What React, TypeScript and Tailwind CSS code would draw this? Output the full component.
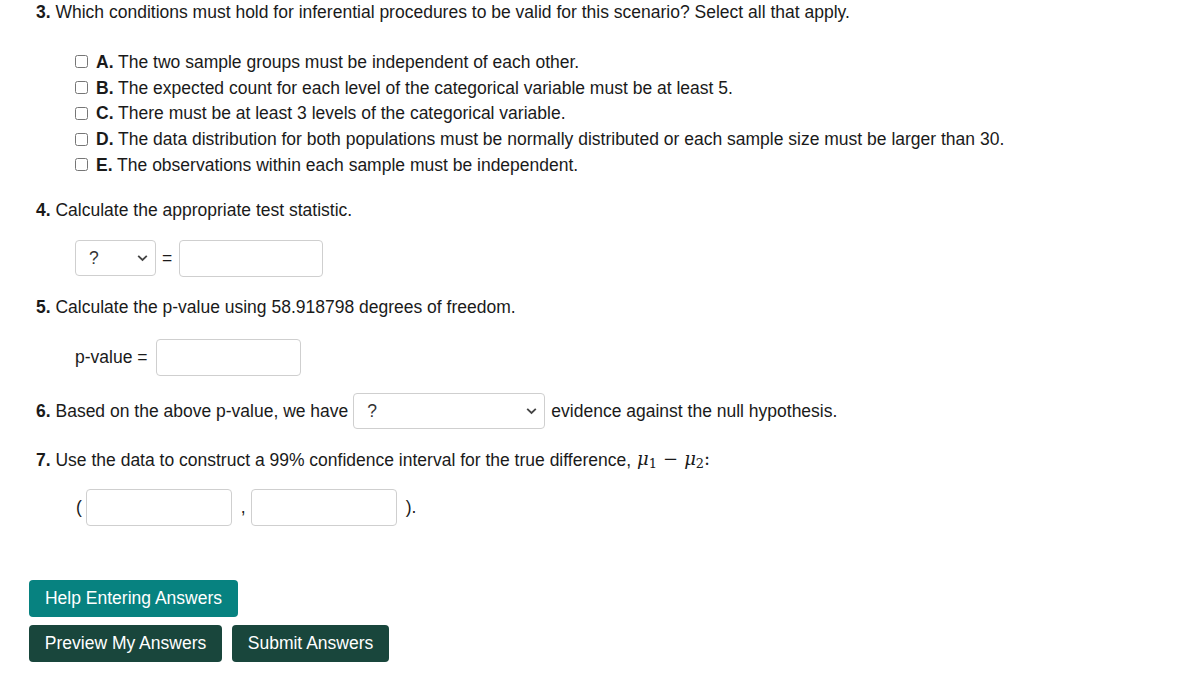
import React from 'react'

const options = [
  { key: 'A', text: 'The two sample groups must be independent of each other.' },
  { key: 'B', text: 'The expected count for each level of the categorical variable must be at least 5.' },
  { key: 'C', text: 'There must be at least 3 levels of the categorical variable.' },
  { key: 'D', text: 'The data distribution for both populations must be normally distributed or each sample size must be larger than 30.' },
  { key: 'E', text: 'The observations within each sample must be independent.' },
]

const Chevron = () => (
  <svg width="11" height="8" viewBox="0 0 11 8" className="pointer-events-none">
    <path d="M1.2 1.8 L5.5 6 L9.8 1.8" fill="none" stroke="#444" strokeWidth="1.8" />
  </svg>
)

const Select = ({ width }: { width: string }) => (
  <div className={`relative flex items-center h-[36px] border border-[#cfcfcf] rounded-[4px] bg-white ${width}`}>
    <span className="pl-[13px] text-[#333]">?</span>
    <span className="absolute right-[7px] top-[13px]">
      <Chevron />
    </span>
  </div>
)

const Box = ({ width }: { width: string }) => (
  <input
    type="text"
    className={`${width} h-[37px] border border-[#cfcfcf] rounded-[4px] bg-white outline-none px-2`}
  />
)

const App = () => {
  return (
    <div className="bg-white w-[1185px] h-[680px] text-[17.5px] leading-[24px] text-[#1a1a1a] pl-[36px]" style={{ fontFamily: '"Liberation Sans", Arial, sans-serif' }}>
      <div>
        <b>3.</b> Which conditions must hold for inferential procedures to be valid for this scenario? Select all that apply.
      </div>

      <div className="mt-[25px] pl-[39px]">
        {options.map((o) => (
          <div key={o.key} className="flex items-center h-[25.75px]">
            <input type="checkbox" className="m-0 w-[13px] h-[13px] mr-[8px]" />
            <span>
              <b>{o.key}.</b> {o.text}
            </span>
          </div>
        ))}
      </div>

      <div className="mt-[20px]">
        <b>4.</b> Calculate the appropriate test statistic.
      </div>
      <div className="mt-[18px] pl-[39px] flex items-center">
        <Select width="w-[81px]" />
        <span className="ml-[6px] mr-[7px]">=</span>
        <Box width="w-[144px]" />
      </div>

      <div className="mt-[18px]">
        <b>5.</b> Calculate the p-value using 58.918798 degrees of freedom.
      </div>
      <div className="mt-[20px] pl-[39px] flex items-center">
        <span className="mr-[9px]">p-value =</span>
        <Box width="w-[145px]" />
      </div>

      <div className="mt-[17px] flex items-center">
        <span>
          <b>6.</b> Based on the above p-value, we have
        </span>
        <span className="ml-[5px]">
          <Select width="w-[192px]" />
        </span>
        <span className="ml-[6px]">evidence against the null hypothesis.</span>
      </div>

      <div className="mt-[19px] h-[24px] flex items-center">
        <span>
          <b>7.</b> Use the data to construct a 99% confidence interval for the true difference,
        </span>
        <span className="ml-[6px] text-[18px] leading-[24px]" style={{ fontFamily: '"DejaVu Serif", "Liberation Serif", serif' }}>
          <i>μ</i>
          <span className="relative top-[3px] text-[13px]">1</span>
          <span className="mx-[6px]">−</span>
          <i>μ</i>
          <span className="relative top-[3px] text-[13px]">2</span>
          <span>:</span>
        </span>
      </div>
      <div className="mt-[17px] pl-[40px] flex items-center">
        <span className="mr-[4px]">(</span>
        <Box width="w-[146px]" />
        <span className="ml-[9px] mr-[5px]">,</span>
        <Box width="w-[146px]" />
        <span className="ml-[9px]">).</span>
      </div>

      <div className="mt-[54px] -ml-[7px] flex flex-col gap-[8px]">
        <div>
          <button type="button" className="h-[37px] w-[209px] rounded-[4px] bg-[#078280] text-white">
            Help Entering Answers
          </button>
        </div>
        <div className="flex gap-[10px]">
          <button type="button" className="h-[37px] w-[193px] rounded-[4px] bg-[#19463c] text-white">
            Preview My Answers
          </button>
          <button type="button" className="h-[37px] w-[157px] rounded-[4px] bg-[#19463c] text-white">
            Submit Answers
          </button>
        </div>
      </div>
    </div>
  )
}

export default App
